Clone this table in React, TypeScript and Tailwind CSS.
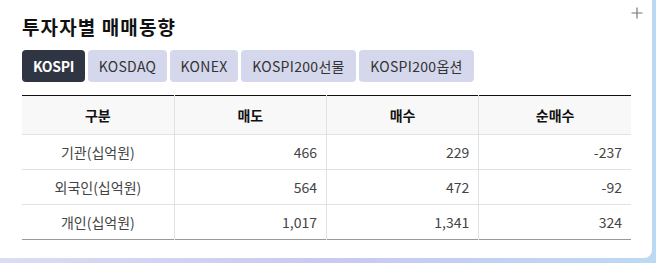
const tabs = [
  { name: "KOSPI", w: "w-[63px]" },
  { name: "KOSDAQ", w: "w-[79px]" },
  { name: "KONEX", w: "w-[68px]" },
  { name: "KOSPI200선물", w: "w-[115px]" },
  { name: "KOSPI200옵션", w: "w-[115px]" },
];

const rows = [
  { label: "기관(십억원)", sell: "466", buy: "229", net: "-237" },
  { label: "외국인(십억원)", sell: "564", buy: "472", net: "-92" },
  { label: "개인(십억원)", sell: "1,017", buy: "1,341", net: "324" },
];

export default function App() {
  return (
    <div
      className="h-[263px] w-[656px] overflow-hidden bg-gradient-to-r from-[#dcdcf6] via-[#c9c9ef] to-[#bcd9f3]"
      style={{ fontFamily: '"Noto Sans CJK KR", "Noto Sans", sans-serif' }}
    >
      <div className="relative h-[258px] w-[652px] rounded-br-[8px] bg-white px-[22px] pt-[13px]">
        <button className="absolute right-[9px] top-[7px] text-[#777]" aria-label="더보기">
          <svg width="12" height="12" viewBox="0 0 12 12">
            <path d="M6 0.5V11.5M0.5 6H11.5" stroke="currentColor" strokeWidth="1.2" />
          </svg>
        </button>
        <h2 className="text-[19px] font-bold leading-[28px] tracking-[1.1px] text-[#111]">투자자별 매매동향</h2>

        <div className="mt-[9px] flex gap-[3px]">
          {tabs.map((t, i) => (
            <div
              key={t.name}
              className={
                i === 0
                  ? `${t.w} flex h-[32px] items-center justify-center rounded-[4px] bg-[#2f3542] text-[14px] font-bold tracking-[-0.3px] text-white`
                  : `${t.w} flex h-[32px] items-center justify-center rounded-[4px] bg-[#d5d8ec] text-[14px] tracking-[0.3px] text-[#333]`
              }
            >
              {t.name}
            </div>
          ))}
        </div>

        <table className="mt-[13px] w-[609px] table-fixed border-collapse text-[14px] text-[#444]">
          <thead>
            <tr className="h-[39px] border-t border-t-[#111] bg-[#f8f8f8]">
              {["구분", "매도", "매수", "순매수"].map((h, i) => (
                <th
                  key={h}
                  className={`text-[14px] font-bold text-[#111] ${i < 3 ? "border-r border-r-[#e2e2e2]" : ""}`}
                >
                  {h}
                </th>
              ))}
            </tr>
          </thead>
          <tbody>
            {rows.map((r, idx) => (
              <tr
                key={r.label}
                className={`h-[35px] border-t border-t-[#e2e2e2] ${idx === rows.length - 1 ? "border-b border-b-[#999]" : ""}`}
              >
                <td className="border-r border-r-[#e2e2e2] text-center">{r.label}</td>
                <td className="border-r border-r-[#e2e2e2] pr-[9px] text-right">{r.sell}</td>
                <td className="border-r border-r-[#e2e2e2] pr-[9px] text-right">{r.buy}</td>
                <td className="pr-[9px] text-right">{r.net}</td>
              </tr>
            ))}
          </tbody>
        </table>
      </div>
    </div>
  );
}
